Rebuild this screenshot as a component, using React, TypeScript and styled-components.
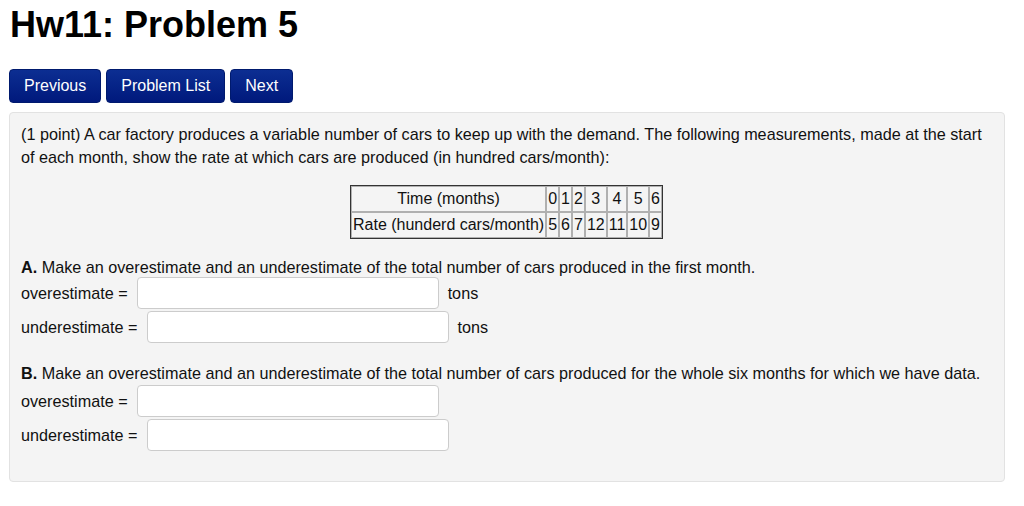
import styled, { createGlobalStyle } from "styled-components";

const GlobalStyle = createGlobalStyle`
  body {
    margin: 0;
    background: #fff;
    font-family: "Liberation Sans", Arial, Helvetica, sans-serif;
    color: #111;
  }
`;

const Page = styled.div`
  padding: 0 20px 0 9px;
`;
const Title = styled.h1`
  margin: 0;
  padding: 4px 0 0 1px;
  font-size: 36px;
  line-height: 42px;
  font-weight: bold;
  color: #000;
`;
const Nav = styled.div`
  display: flex;
  gap: 5px;
  margin-top: 23px;
`;
const NavButton = styled.button`
  height: 34px;
  padding: 0 14px;
  border: 1px solid #001a6e;
  border-radius: 4px;
  background: linear-gradient(#0c2e92, #00197c);
  color: #fff;
  font-family: inherit;
  font-size: 16px;
  cursor: pointer;
`;
const Panel = styled.div`
  margin-top: 9px;
  padding: 10px 12px 29px 11px;
  width: 971px;
  background: #f4f4f4;
  border: 1px solid #e2e2e2;
  border-radius: 4px;
  font-size: 16.2px;
  line-height: 23px;
`;
const Para = styled.p`
  margin: 0;
`;
const TableWrap = styled.div`
  display: flex;
  justify-content: center;
  margin: 16px 0 17px;
`;
const DataTable = styled.table`
  border-collapse: separate;
  border-spacing: 0;
  border: 1px solid #333;
  font-size: 16px;
  line-height: 24px;
`;
const Cell = styled.td`
  border: 1px solid #b0b0b0;
  padding: 0 1px;
  text-align: center;
`;
const Section = styled.div``;
const SectionHead = styled.p<{ $pull: number }>`
  margin: 0 0 ${({ $pull }) => -$pull}px 0;
`;
const AnswerRow = styled.div`
  display: flex;
  align-items: center;
  height: 34px;
`;
const Label = styled.span`
  margin-right: 9px;
`;
const Answer = styled.input`
  box-sizing: border-box;
  width: 302px;
  height: 32px;
  border: 1px solid #ccc;
  border-radius: 4px;
  background: #fff;
  margin-right: 9px;
`;
const Unit = styled.span``;
const Gap = styled.div`
  height: 18px;
`;

const times = ["0", "1", "2", "3", "4", "5", "6"];
const rates = ["5", "6", "7", "12", "11", "10", "9"];

export default function App() {
  return (
    <Page>
      <GlobalStyle />
      <Title>Hw11: Problem 5</Title>
      <Nav>
        <NavButton>Previous</NavButton>
        <NavButton>Problem List</NavButton>
        <NavButton>Next</NavButton>
      </Nav>
      <Panel>
        <Para>
          (1 point) A car factory produces a variable number of cars to keep up with the demand. The following
          measurements, made at the start of each month, show the rate at which cars are produced (in hundred
          cars/month):
        </Para>
        <TableWrap>
          <DataTable>
            <tbody>
              <tr>
                <Cell>Time (months)</Cell>
                {times.map((t) => (
                  <Cell key={t}>{t}</Cell>
                ))}
              </tr>
              <tr>
                <Cell>Rate (hunderd cars/month)</Cell>
                {rates.map((r, i) => (
                  <Cell key={i}>{r}</Cell>
                ))}
              </tr>
            </tbody>
          </DataTable>
        </TableWrap>
        <Section>
          <SectionHead $pull={3}>
            <b>A.</b> Make an overestimate and an underestimate of the total number of cars produced in the first
            month.
          </SectionHead>
          <AnswerRow>
            <Label>overestimate =</Label>
            <Answer />
            <Unit>tons</Unit>
          </AnswerRow>
          <AnswerRow>
            <Label>underestimate =</Label>
            <Answer />
            <Unit>tons</Unit>
          </AnswerRow>
        </Section>
        <Gap />
        <Section>
          <SectionHead $pull={1}>
            <b>B.</b> Make an overestimate and an underestimate of the total number of cars produced for the whole
            six months for which we have data.
          </SectionHead>
          <AnswerRow>
            <Label>overestimate =</Label>
            <Answer />
          </AnswerRow>
          <AnswerRow>
            <Label>underestimate =</Label>
            <Answer />
          </AnswerRow>
        </Section>
      </Panel>
    </Page>
  );
}
